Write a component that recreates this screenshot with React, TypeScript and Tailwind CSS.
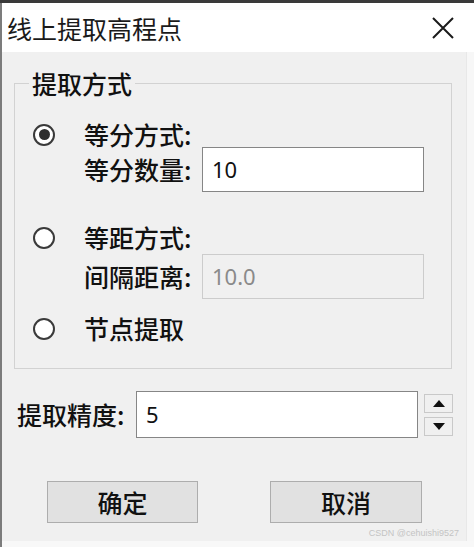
import React from "react";

function Radio({ checked }: { checked?: boolean }) {
  return (
    <div className="w-[22px] h-[22px] shrink-0 rounded-full border-2 border-[#3a3a3a] bg-white flex items-center justify-center">
      {checked && <div className="w-[11px] h-[11px] rounded-full bg-[#2e2e2e]" />}
    </div>
  );
}

function Tri({ up }: { up?: boolean }) {
  return (
    <svg width="12" height="7" viewBox="0 0 12 7">
      {up ? <polygon points="6,0 12,7 0,7" fill="#111" /> : <polygon points="0,0 12,0 6,7" fill="#111" />}
    </svg>
  );
}

export default function App() {
  return (
    <div className="relative w-[474px] h-[547px] flex flex-col bg-[#f9f9f9] font-['Noto_Sans_CJK_SC','Noto_Sans',sans-serif] font-medium text-[#111] overflow-hidden">
      <div className="h-[3px] bg-[#3a3a3a] shrink-0" />
      <div className="flex flex-col flex-1 border-l-2 border-[#7c7c7c]">
        <div className="h-[49px] shrink-0 bg-white flex items-center justify-between pl-[5px] pr-[20px]">
          <span className="text-[25px] leading-[30px] font-normal text-[#1a1a1a]">线上提取高程点</span>
          <svg width="22" height="22" viewBox="0 0 22 22">
            <path d="M1 1 L21 21 M21 1 L1 21" stroke="#1a1a1a" strokeWidth="2" />
          </svg>
        </div>
        <div className="flex flex-1">
          <div className="flex-1 bg-[#f0f0f0] pl-[12px] flex flex-col text-[25px]">
            <fieldset className="mt-[18px] w-[438px] border border-[#d2d2d2] pl-[18px] pt-[25px] pb-[27px]">
              <legend className="ml-[-4px] px-[3px] leading-[27px]">提取方式</legend>
              <div className="flex items-center h-[25px]">
                <Radio checked />
                <span className="ml-[29px] leading-[25px]">等分方式:</span>
              </div>
              <div className="flex items-center h-[45px] pl-[51px]">
                <span className="w-[118px] leading-[25px]">等分数量:</span>
                <div className="w-[222px] h-[45px] border border-[#868686] bg-white flex items-center pl-[9px] font-['Noto_Sans',sans-serif] font-normal text-[22px]">
                  10
                </div>
              </div>
              <div className="flex items-center h-[25px] mt-[33px]">
                <Radio />
                <span className="ml-[29px] leading-[25px]">等距方式:</span>
              </div>
              <div className="flex items-center h-[45px] mt-[4px] pl-[51px]">
                <span className="w-[118px] leading-[25px]">间隔距离:</span>
                <div className="w-[222px] h-[45px] border border-[#cccccc] bg-[#f0f0f0] flex items-center pl-[9px] font-['Noto_Sans',sans-serif] font-normal text-[22px] text-[#8a8a8a]">
                  10.0
                </div>
              </div>
              <div className="flex items-center h-[25px] mt-[17px]">
                <Radio />
                <span className="ml-[29px] leading-[25px]">节点提取</span>
              </div>
            </fieldset>
            <div className="flex items-center h-[47px] mt-[22px]">
              <span className="w-[122px] pl-[3px] leading-[25px]">提取精度:</span>
              <div className="w-[282px] h-[47px] border border-[#868686] bg-white flex items-center pl-[9px] font-['Noto_Sans',sans-serif] font-normal text-[22px]">
                5
              </div>
              <div className="ml-[6px] flex flex-col gap-[4px]">
                <div className="w-[29px] h-[19px] border border-[#c9c9c9] bg-[#f0f0f0] flex items-center justify-center">
                  <Tri up />
                </div>
                <div className="w-[29px] h-[19px] border border-[#c9c9c9] bg-[#f0f0f0] flex items-center justify-center">
                  <Tri />
                </div>
              </div>
            </div>
            <div className="flex h-[42px] mt-[43px]">
              <div className="ml-[33px] w-[151px] h-[42px] border border-[#adadad] bg-[#e1e1e1] flex items-center justify-center leading-[25px]">
                确定
              </div>
              <div className="ml-[72px] w-[152px] h-[42px] border border-[#adadad] bg-[#e1e1e1] flex items-center justify-center leading-[25px]">
                取消
              </div>
            </div>
          </div>
          <div className="w-[8px] bg-[#f7f7f7] border-l border-[#e8e8e8]" />
        </div>
        <div className="h-[6px] shrink-0 bg-[#f8f8f8]" />
      </div>
      <span className="absolute right-[15px] bottom-[9px] text-[9px] leading-[10px] font-normal text-[#c4c4c4] font-['Liberation_Sans',sans-serif]">
        CSDN @cehuishi9527
      </span>
    </div>
  );
}
